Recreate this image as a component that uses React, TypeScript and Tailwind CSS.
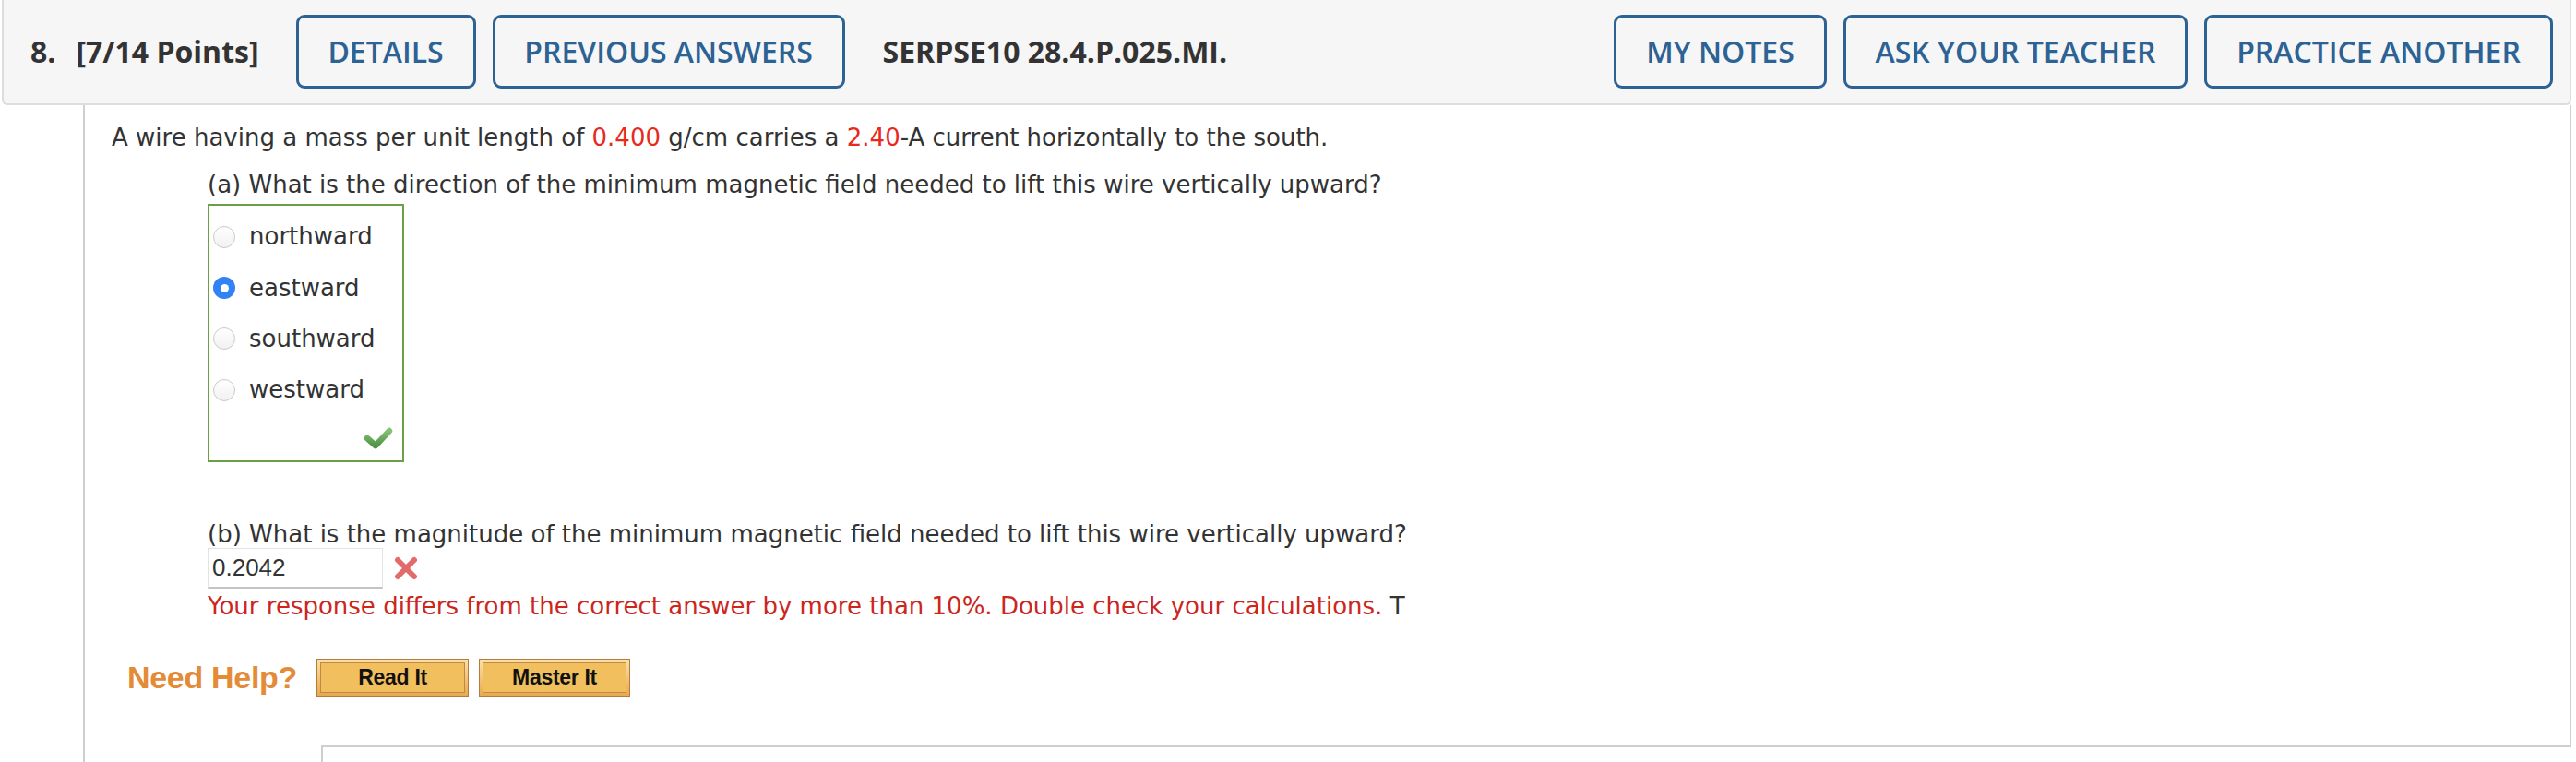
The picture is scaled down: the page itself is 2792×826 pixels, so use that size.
import React from "react";

const body = { fontFamily: '"DejaVu Sans", Verdana, sans-serif' };
const head = { fontFamily: '"Open Sans", "Liberation Sans", sans-serif' };
const arial = { fontFamily: '"Liberation Sans", Arial, sans-serif' };

function HeadButton({ label, w }: { label: string; w: string }) {
  return (
    <div
      className={`${w} h-[80px] flex items-center justify-center rounded-[9px] border-[3px] border-[#2c6294] text-[#2c6294] text-[32px] font-semibold bg-[#f6f6f6]`}
      style={head}
    >
      {label}
    </div>
  );
}

function Radio({ checked }: { checked?: boolean }) {
  if (checked) {
    return (
      <div className="w-[24px] h-[24px] rounded-full bg-[#3282f6] flex items-center justify-center shrink-0">
        <div className="w-[9px] h-[9px] rounded-full bg-white" />
      </div>
    );
  }
  return (
    <div className="w-[24px] h-[24px] rounded-full border-[1.5px] border-[#cacaca] bg-gradient-to-b from-white to-[#f1f1f1] shrink-0" />
  );
}

function Option({ label, checked }: { label: string; checked?: boolean }) {
  return (
    <div className="h-[55.4px] flex items-center">
      <Radio checked={checked} />
      <span className="ml-[15px] text-[26px] text-[#333]" style={body}>
        {label}
      </span>
    </div>
  );
}

function HelpButton({ label, w }: { label: string; w: string }) {
  return (
    <div className={`${w} h-[41px] border-[1.5px] border-[#b47c3c] bg-gradient-to-b from-[#fbe0a8] to-[#e9a94e] p-[3px]`}>
      <div
        className="w-full h-full border border-[#c08a45] bg-[#f1bf5d] flex items-center justify-center text-[23px] font-bold text-[#111] tracking-[-0.3px]"
        style={arial}
      >
        {label}
      </div>
    </div>
  );
}

export default function App() {
  return (
    <div className="w-[2792px] h-[826px] bg-white overflow-hidden">
      {/* Header */}
      <div
        className="ml-[2px] w-[2785px] h-[114px] bg-[#f6f6f6] border-x-2 border-b-2 border-[#dddddd] rounded-b-[6px] flex items-center pl-[29px] pr-[18px]"
        style={head}
      >
        <span className="text-[32px] font-bold text-[#333]">8.</span>
        <span className="ml-[22px] text-[32px] font-bold text-[#333]">[7/14 Points]</span>
        <div className="ml-[40px] flex gap-[18px]">
          <HeadButton label="DETAILS" w="w-[195px]" />
          <HeadButton label="PREVIOUS ANSWERS" w="w-[382px]" />
        </div>
        <span className="ml-[41px] text-[32px] font-bold text-[#333]">SERPSE10 28.4.P.025.MI.</span>
        <div className="ml-auto flex gap-[18px]">
          <HeadButton label="MY NOTES" w="w-[231px]" />
          <HeadButton label="ASK YOUR TEACHER" w="w-[373px]" />
          <HeadButton label="PRACTICE ANOTHER" w="w-[378px]" />
        </div>
      </div>

      {/* Content */}
      <div className="ml-[90px] w-[2697px] border-l-2 border-[#cfcfcf]">
        <div className="border-r-2 border-[#cfcfcf] pl-[29px] pt-[17px] pb-[48px]" style={body}>
          <div className="text-[26px] leading-[36px] text-[#333]">
            A wire having a mass per unit length of <span className="text-[#e8291d]">0.400</span> g/cm carries a{" "}
            <span className="text-[#e8291d]">2.40</span>-A current horizontally to the south.
          </div>

          <div className="ml-[104px]">
            <div className="mt-[15px] text-[26px] leading-[36px] text-[#333]">
              (a) What is the direction of the minimum magnetic field needed to lift this wire vertically upward?
            </div>
            <div className="mt-[3px] w-[213px] border-2 border-[#6c9f48] pt-[6px] pl-[4px] pr-[10px] pb-[12px]">
              <Option label="northward" />
              <Option label="eastward" checked />
              <Option label="southward" />
              <Option label="westward" />
              <div className="mt-[11px] h-[25px] flex justify-end">
                <svg width="32" height="26" viewBox="0 0 32 26">
                  <defs>
                    <linearGradient id="ck" x1="0" y1="0" x2="0" y2="1">
                      <stop offset="0" stopColor="#86c173" />
                      <stop offset="1" stopColor="#4f9447" />
                    </linearGradient>
                  </defs>
                  <polyline
                    points="4,13 13,21 28,5"
                    fill="none"
                    stroke="url(#ck)"
                    strokeWidth="6.5"
                    strokeLinecap="round"
                    strokeLinejoin="round"
                  />
                </svg>
              </div>
            </div>

            <div className="mt-[60px] text-[26px] leading-[36px] text-[#333]">
              (b) What is the magnitude of the minimum magnetic field needed to lift this wire vertically upward?
            </div>
            <div className="mt-[-3px] flex items-center">
              <div
                className="w-[190px] h-[44px] border border-[#e3e3e3] border-b-[2px] border-b-[#c4c4c4] bg-white flex items-center pl-[4px] text-[26px] text-[#333]"
                style={arial}
              >
                0.2042
              </div>
              <svg className="ml-[11px]" width="28" height="26" viewBox="0 0 28 26">
                <g stroke="#e26a6a" strokeWidth="6" strokeLinecap="round">
                  <line x1="5" y1="4" x2="23" y2="22" />
                  <line x1="23" y1="4" x2="5" y2="22" />
                </g>
              </svg>
            </div>
            <div className="mt-[1px] text-[26px] leading-[36px]">
              <span className="text-[#cc261d]">
                Your response differs from the correct answer by more than 10%. Double check your calculations.
              </span>
              <span className="text-[#333]"> T</span>
            </div>
          </div>

          <div className="mt-[34px] ml-[17px] flex items-center">
            <span className="text-[34px] font-bold text-[#e38b36] tracking-[-0.3px]" style={arial}>
              Need Help?
            </span>
            <div className="ml-[21px] flex gap-[11px]">
              <HelpButton label="Read It" w="w-[165px]" />
              <HelpButton label="Master It" w="w-[164px]" />
            </div>
          </div>
        </div>
        <div className="ml-[256px] h-[40px] border-t-2 border-l-2 border-[#cfcfcf]" />
      </div>
    </div>
  );
}
